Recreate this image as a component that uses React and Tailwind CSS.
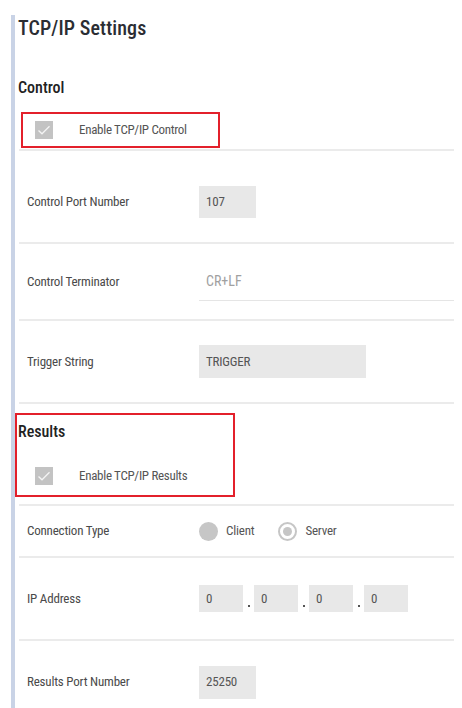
import React, { useState } from 'react';

const font = { fontFamily: '"Roboto Condensed", Roboto, "Liberation Sans", sans-serif' };

function Divider() {
  return <div className="ml-[4px] w-[435px] h-[2px] bg-[#ebebeb]" />;
}

function CheckBox({ checked }) {
  return (
    <div className="w-[18px] h-[18px] bg-[#c3c3c3] flex items-center justify-center">
      {checked && (
        <svg width="18" height="18" viewBox="0 0 18 18" fill="none">
          <path d="M3.5 9.5 L7 12.8 L14.5 5.2" stroke="#f4f4f4" strokeWidth="1.3" />
        </svg>
      )}
    </div>
  );
}

function Row({ label, height, children }) {
  return (
    <div className={`ml-[4px] w-[435px] flex items-center ${height}`}>
      <div className="w-[180px] pl-[8px] text-[13px] tracking-[-0.2px] text-[#4a4a4a]">{label}</div>
      {children}
    </div>
  );
}

function GrayInput({ value, width, height = 'h-[32px]' }) {
  return (
    <div className={`${width} ${height} bg-[#e8e8e8] flex items-center pl-[7px] text-[13px] tracking-[-0.2px] text-[#555]`}>
      {value}
    </div>
  );
}

export default function App() {
  const [connType] = useState('server');

  return (
    <div className="w-[462px] h-[708px] bg-white overflow-hidden" style={font}>
      <div className="pt-[15px] pl-[11px]">
        <div className="border-l-4 border-[#c9d3e6] min-h-[693px]">
          {/* title */}
          <div className="h-[26px] flex items-center pl-[3px] text-[20px] font-medium text-[#2b2d33] tracking-[0.1px]">
            TCP/IP Settings
          </div>

          {/* Control */}
          <div className="mt-[37px] h-[20px] flex items-center pl-[3px] text-[16px] font-medium text-[#222]">
            Control
          </div>
          <div className="mt-[14px] ml-[6px] w-[199px] h-[36px] border-2 border-[#e3202b] flex items-center pl-[12px]">
            <CheckBox checked />
            <span className="ml-[26px] text-[13px] tracking-[-0.3px] text-[#555]">Enable TCP/IP Control</span>
          </div>
          <div className="h-px" />
          <Divider />

          <Row label="Control Port Number" height="h-[91px] pt-[10px]">
            <GrayInput value="107" width="w-[57px]" />
          </Row>
          <Divider />

          <Row label="Control Terminator" height="h-[75px]">
            <div className="flex-1 h-[39px] border-b border-[#e5e5e5] flex items-center pl-[7px] text-[14px] text-[#a0a0a0]">
              CR+LF
            </div>
          </Row>
          <Divider />

          <Row label="Trigger String" height="h-[81px]">
            <GrayInput value="TRIGGER" width="w-[167px]" height="h-[33px]" />
          </Row>
          <Divider />

          {/* Results */}
          <div className="mt-[9px] w-[220px] h-[84px] border-2 border-[#e3202b]">
            <div className="mt-[7px] h-[20px] flex items-center pl-[1px] text-[16px] font-medium text-[#222]">
              Results
            </div>
            <div className="mt-[24px] flex items-center pl-[18px]">
              <CheckBox checked />
              <span className="ml-[26px] text-[13px] tracking-[-0.3px] text-[#555]">Enable TCP/IP Results</span>
            </div>
          </div>
          <div className="h-[7px]" />
          <Divider />

          <Row label="Connection Type" height="h-[50px]">
            <div className="flex items-center">
              <div className={`w-[19px] h-[19px] rounded-full ${connType === 'client' ? 'border-2 border-[#c6c6c6]' : 'bg-[#c6c6c6]'}`} />
              <span className="ml-[8px] text-[13px] tracking-[-0.2px] text-[#555]">Client</span>
              <div className="ml-[24px] w-[19px] h-[19px] rounded-full border-2 border-[#c6c6c6] flex items-center justify-center">
                <div className="w-[9px] h-[9px] rounded-full bg-[#c6c6c6]" />
              </div>
              <span className="ml-[8px] text-[13px] tracking-[-0.2px] text-[#555]">Server</span>
            </div>
          </Row>
          <Divider />

          <Row label="IP Address" height="h-[81px]">
            <div className="flex items-end">
              {[0, 1, 2, 3].map((i) => (
                <React.Fragment key={i}>
                  {i > 0 && (
                    <div className="w-[11px] h-[27px] flex items-end justify-center pb-[5px]">
                      <div className="w-[2px] h-[2px] bg-[#555]" />
                    </div>
                  )}
                  <GrayInput value="0" width="w-[44px]" height="h-[27px]" />
                </React.Fragment>
              ))}
            </div>
          </Row>
          <Divider />

          <Row label="Results Port Number" height="h-[82px]">
            <GrayInput value="25250" width="w-[57px]" height="h-[33px]" />
          </Row>
        </div>
      </div>
    </div>
  );
}
